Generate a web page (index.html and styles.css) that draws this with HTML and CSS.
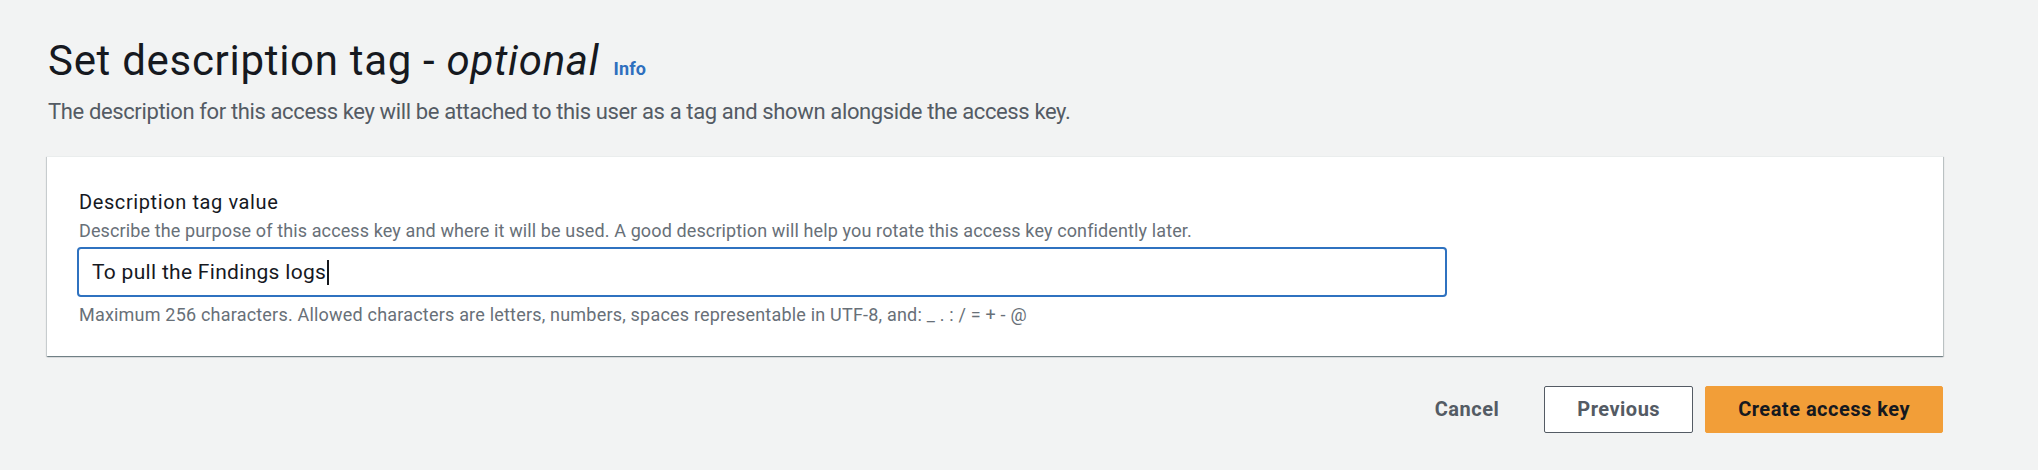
FILE: index.html
```html
<!DOCTYPE html>
<html lang="en">
<head>
<meta charset="utf-8">
<title>Set description tag</title>
<link rel="stylesheet" href="styles.css">
</head>
<body>
<main class="page">
  <header class="header">
    <h1 class="title">Set description tag - <i class="title-opt">optional</i> <a class="info" href="#">Info</a></h1>
    <p class="desc">The description for this access key will be attached to this user as a tag and shown alongside the access key.</p>
  </header>
  <section class="card">
    <label class="label" for="tag">Description tag value</label>
    <p class="hint">Describe the purpose of this access key and where it will be used. A good description will help you rotate this access key confidently later.</p>
    <div class="input" id="tag">To pull the Findings logs<span class="caret"></span></div>
    <p class="constraint">Maximum 256 characters. Allowed characters are letters, numbers, spaces representable in UTF-8, and: _ . : / = + - @</p>
  </section>
  <div class="actions">
    <button class="btn btn-link">Cancel</button>
    <button class="btn btn-normal">Previous</button>
    <button class="btn btn-primary">Create access key</button>
  </div>
</main>
</body>
</html>
```

FILE: styles.css
```css
* { box-sizing: border-box; }

html, body {
  margin: 0;
  padding: 0;
  background: #f2f3f3;
}

body {
  font-family: Roboto, "Liberation Sans", Arial, sans-serif;
  color: #16191f;
}

.page {
  padding: 36px 95px 0 47px;
}

.header {
  padding-left: 1px;
}

.title {
  margin: 0;
  font-size: 42px;
  line-height: 50px;
  font-weight: 400;
  letter-spacing: 0.7px;
  color: #16191f;
}

.title-opt {
  font-style: italic;
}

.info {
  font-size: 18px;
  font-weight: 700;
  letter-spacing: 0.2px;
  color: #2e6fbe;
  text-decoration: none;
  margin-left: 3px;
}

.desc {
  margin: 3px 0 0;
  font-size: 22px;
  line-height: 30px;
  letter-spacing: -0.37px;
  color: #545b64;
}

.card {
  margin: 29px 0 0;
  padding: 31px 32px 29px;
  background: #fff;
  border-top: 1px solid #eaeded;
  box-shadow: 0 1px 1px 0 rgba(0, 28, 36, 0.35), 1px 1px 1px 0 rgba(0, 28, 36, 0.18), -1px 1px 1px 0 rgba(0, 28, 36, 0.12);
}

.label {
  display: block;
  font-size: 20px;
  line-height: 28px;
  letter-spacing: 0.6px;
  color: #16191f;
}

.hint {
  margin: 3px 0 0;
  font-size: 18px;
  line-height: 24px;
  letter-spacing: 0.12px;
  color: #687078;
}

.input {
  display: flex;
  align-items: center;
  margin: 4px 0 0 -2px;
  width: 1370px;
  height: 50px;
  padding: 0 13px;
  border: 2px solid #2f72c0;
  border-radius: 4px;
  font-size: 21px;
  letter-spacing: 0.3px;
  color: #16191f;
}

.caret {
  display: inline-block;
  width: 1.5px;
  height: 25px;
  margin-left: 1px;
  background: #16191f;
}

.constraint {
  margin: 6px 0 0;
  font-size: 18px;
  line-height: 24px;
  letter-spacing: 0.2px;
  color: #687078;
}

.actions {
  display: flex;
  justify-content: flex-end;
  align-items: center;
  gap: 12px;
  margin-top: 30px;
}

.btn {
  font-family: inherit;
  font-size: 20px;
  font-weight: 700;
  letter-spacing: 0.5px;
  line-height: 45px;
  height: 47px;
  padding: 0 32px;
  border: 1px solid transparent;
  border-radius: 2px;
  background: none;
  cursor: pointer;
}

.btn-link {
  color: #545b64;
  padding: 0 22px;
  margin-right: 10px;
}

.btn-normal {
  color: #545b64;
  background: #fff;
  border-color: #545b64;
}

.btn-primary {
  color: #16191f;
  background: #f29e38;
  border-color: #f29e38;
}
```
